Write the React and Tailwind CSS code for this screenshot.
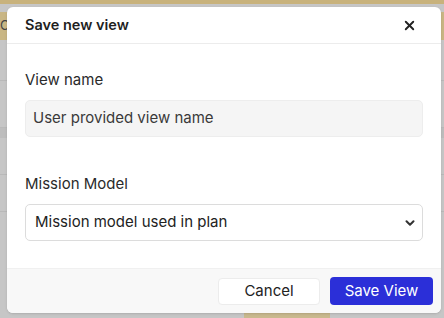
import { X, ChevronDown } from 'lucide-react';

function Backdrop() {
  return (
    <div className="absolute inset-0 bg-[#c6c6c6] flex flex-col">
      <div className="h-[4px] bg-[#c8b27c]" />
      <div className="h-[8px]" />
      <div className="h-[28px] bg-[#c9b684] flex items-center pl-0 text-[13px] text-[#444]">C</div>
      <div className="h-[41px] border-b border-[#b9b9b9]" />
      <div className="h-[47px] border-b border-[#b9b9b9]" />
      <div className="h-[10px] bg-[#bdbdbd]" />
      <div className="h-[37px] border-b border-[#b9b9b9]" />
      <div className="h-[37px] border-b border-[#b9b9b9]" />
      <div className="flex-1 flex">
        <div className="w-[244px]" />
        <div className="w-[86px] mt-auto h-[6px] bg-[#c9b98e]" />
      </div>
    </div>
  );
}

export default function App() {
  return (
    <div className="relative w-[444px] h-[318px] overflow-hidden font-['Inter',sans-serif]">
      <Backdrop />
      <div className="absolute left-[7px] top-[7px] w-[434px] h-[306px] bg-white rounded-[6px] shadow-sm flex flex-col overflow-hidden">
        <div className="h-[37px] flex items-center justify-between pl-[18px] pr-[24px] border-b border-[#ececec]">
          <span className="text-[14.5px] font-semibold text-[#1f1f1f]">Save new view</span>
          <X className="w-[15px] h-[15px] text-[#222]" strokeWidth={3} />
        </div>
        <div className="flex-1 px-[18px] pt-[27px]">
          <div className="text-[15px] text-[#2a2a2a] leading-[18px]">View name</div>
          <div className="mt-[11px] h-[37px] rounded-[5px] bg-[#f5f5f5] border border-[#ededed] flex items-center px-[7px] text-[15px] text-[#3a3a3a]">
            User provided view name
          </div>
          <div className="mt-[38px] text-[15px] text-[#2a2a2a] leading-[18px]">Mission Model</div>
          <div className="mt-[11px] h-[37px] rounded-[5px] bg-white border border-[#dcdcdc] flex items-center justify-between pl-[9px] pr-[5px] text-[15px] text-[#222]">
            <span>Mission model used in plan</span>
            <ChevronDown className="w-[14px] h-[14px] text-[#333]" strokeWidth={3.5} />
          </div>
        </div>
        <div className="h-[45px] bg-[#f8f8f8] flex items-center justify-end gap-[10px] pr-[8px] border-t border-[#f0f0f0]">
          <button className="w-[102px] h-[27px] rounded-[4px] bg-white border border-[#ececec] text-[15px] text-[#222]">Cancel</button>
          <button className="w-[103px] h-[28px] rounded-[4px] bg-[#2b2fd8] text-[15px] text-white">Save View</button>
        </div>
      </div>
    </div>
  );
}
